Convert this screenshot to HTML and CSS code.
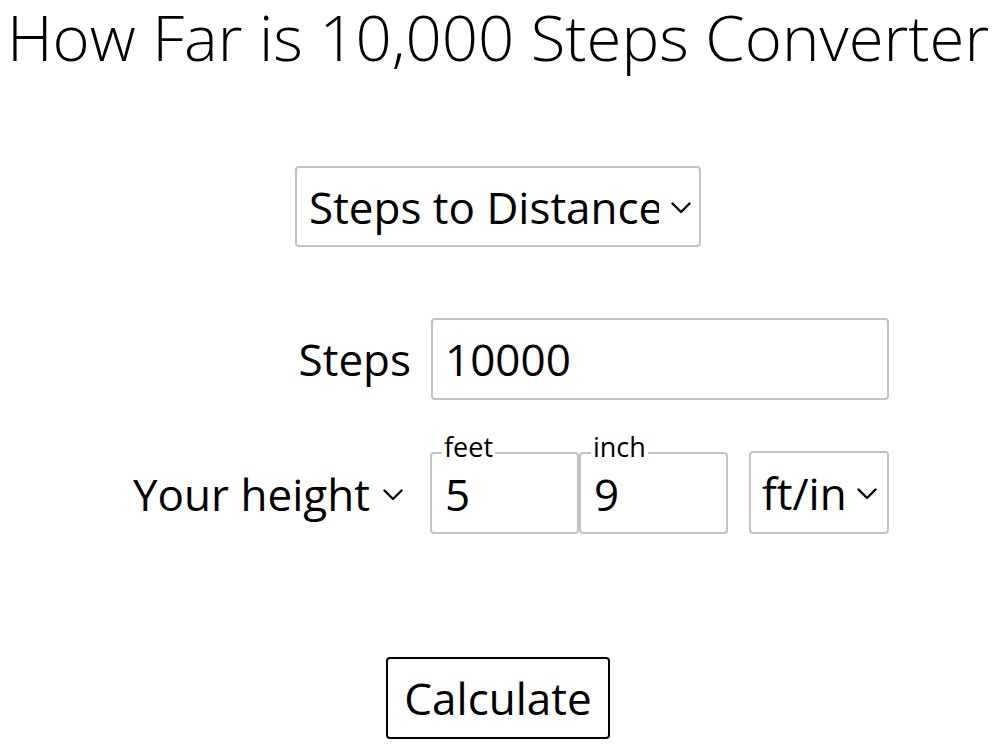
FILE: index.html
```html
<!DOCTYPE html>
<html lang="en">
<head>
<meta charset="utf-8">
<title>How Far is 10,000 Steps Converter</title>
<link rel="stylesheet" href="styles.css">
</head>
<body>
<h1 class="title">How Far is 10,000 Steps Converter</h1>

<div class="mode">
  <span class="select-wrap">
    <select class="select mode-select">
      <option>Steps to Distance</option>
      <option>Distance to Steps</option>
    </select>
    <svg class="chevron" viewBox="0 0 20 12"><polyline points="1.5,1.5 10,10 18.5,1.5" fill="none" stroke="#000" stroke-width="2.4" stroke-linecap="round" stroke-linejoin="round"/></svg>
  </span>
</div>

<div class="form">
  <label class="label steps-label" for="steps">Steps</label>
  <input id="steps" class="steps-input" type="text" value="10000">

  <span class="select-wrap height-label">
    <select class="plain-select">
      <option>Your height</option>
    </select>
    <svg class="chevron label-chevron" viewBox="0 0 20 12"><polyline points="1.5,1.5 10,10 18.5,1.5" fill="none" stroke="#000" stroke-width="2.4" stroke-linecap="round" stroke-linejoin="round"/></svg>
  </span>
  <div class="height-inputs">
    <fieldset class="part">
      <legend class="part-legend">feet</legend>
      <input class="part-input" type="text" value="5">
    </fieldset>
    <fieldset class="part">
      <legend class="part-legend">inch</legend>
      <input class="part-input" type="text" value="9">
    </fieldset>
    <span class="select-wrap unit-wrap">
      <select class="select unit-select">
        <option>ft/in</option>
        <option>cm</option>
      </select>
      <svg class="chevron unit-chevron" viewBox="0 0 20 12"><polyline points="1.5,1.5 10,10 18.5,1.5" fill="none" stroke="#000" stroke-width="2.4" stroke-linecap="round" stroke-linejoin="round"/></svg>
    </span>
  </div>
</div>

<div class="actions">
  <button class="calc" type="button">Calculate</button>
</div>
</body>
</html>
```

FILE: styles.css
```css
body {
  margin: 0;
  font-family: "Open Sans", "Noto Sans", sans-serif;
  color: #000;
  background: #fff;
}

.title {
  margin: 0;
  text-align: center;
  font-weight: 300;
  font-size: 63.5px;
  line-height: 73px;
  white-space: nowrap;
}

.mode {
  margin-top: 93px;
  display: flex;
  justify-content: center;
}

.select-wrap {
  position: relative;
  display: inline-flex;
}

.select {
  appearance: none;
  -webkit-appearance: none;
  font-family: inherit;
  font-size: 44px;
  color: #000;
  background: #fff;
  border: 2px solid #c3c3c3;
  border-radius: 4px;
  margin: 0;
  box-sizing: border-box;
}

.mode-select {
  width: 406px;
  height: 81px;
  padding: 0 40px 0 12px;
}

.chevron {
  position: absolute;
  right: 10px;
  top: 50%;
  margin-top: -5px;
  width: 20px;
  height: 12px;
  pointer-events: none;
}

.form {
  margin-top: 71px;
  display: grid;
  grid-template-columns: 1fr 458px;
  column-gap: 20px;
  row-gap: 33px;
  padding-right: 107px;
  align-items: center;
}

.label {
  font-size: 44px;
  justify-self: end;
}

.steps-input {
  width: 458px;
  height: 82px;
  box-sizing: border-box;
  border: 2px solid #c3c3c3;
  border-radius: 4px;
  padding: 0 12px;
  margin: 0;
  font-family: inherit;
  font-size: 44px;
  color: #000;
}

.height-label {
  justify-self: end;
  align-self: end;
}

.plain-select {
  appearance: none;
  -webkit-appearance: none;
  border: none;
  background: transparent;
  font-family: inherit;
  font-size: 44px;
  color: #000;
  height: 81px;
  padding: 0 41px 0 0;
  margin: 0;
}

.label-chevron {
  right: 8px;
}

.height-inputs {
  display: flex;
  align-items: flex-end;
  margin-left: -1px;
}

.part {
  width: 149px;
  box-sizing: border-box;
  margin: 0;
  padding: 0;
  border: 2px solid #c3c3c3;
  border-radius: 4px;
  min-width: 0;
}

.part-legend {
  font-size: 27px;
  line-height: 28px;
  margin-left: 10px;
  padding: 0 2px 11px;
}

.part-input {
  display: block;
  width: 100%;
  box-sizing: border-box;
  height: 60px;
  border: none;
  outline: none;
  margin: 0;
  padding: 0 8px 16px 13px;
  font-family: inherit;
  font-size: 44px;
  color: #000;
  background: transparent;
}

.unit-wrap {
  margin-left: 21px;
}

.unit-select {
  width: 140px;
  height: 83px;
  padding: 0 36px 0 11px;
}

.unit-chevron {
  right: 12px;
}

.actions {
  margin-top: 123px;
  display: flex;
  justify-content: center;
}

.calc {
  width: 224px;
  height: 82px;
  box-sizing: border-box;
  border: 2px solid #000;
  border-radius: 4px;
  background: #fff;
  color: #000;
  font-family: inherit;
  font-size: 44px;
  padding: 0;
  margin: 0;
}
```
